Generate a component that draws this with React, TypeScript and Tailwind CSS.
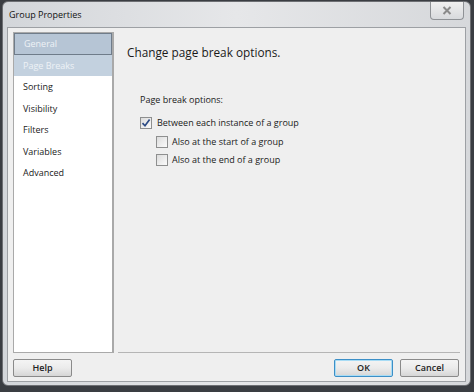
const navItems = ['General', 'Page Breaks', 'Sorting', 'Visibility', 'Filters', 'Variables', 'Advanced']

function CheckBox({ checked }: { checked?: boolean }) {
  return (
    <span className="flex h-[12px] w-[12px] shrink-0 items-center justify-center border border-[#8e8f8f] bg-gradient-to-br from-[#dcdcdc] to-[#fbfbfb]">
      {checked && (
        <svg width="10" height="10" viewBox="0 0 10 10">
          <path d="M1.5 5.2 L4 7.8 L8.6 1.6" fill="none" stroke="#2c4b85" strokeWidth="1.7" />
        </svg>
      )}
    </span>
  )
}

function Button({ label, primary }: { label: string; primary?: boolean }) {
  return (
    <button
      className={
        'flex h-[18px] w-[59px] items-center justify-center rounded-[2px] border bg-gradient-to-b from-[#f4f4f4] via-[#ebebeb] to-[#d6d6d6] text-[9px] font-semibold text-[#222] ' +
        (primary ? 'border-[#3c8fc7] shadow-[inset_0_0_0_1px_#a8dcf5]' : 'border-[#8a8a8a]')
      }
    >
      {label}
    </button>
  )
}

export default function App() {
  return (
    <div className="h-[392px] w-[474px] overflow-hidden bg-[#3a3d42] font-['Segoe_UI','Open_Sans','Noto_Sans',sans-serif]">
      <div className="ml-[2px] mt-[1px] flex h-[385px] w-[469px] flex-col rounded-[6px] border border-[#6d6f73] bg-gradient-to-r from-[#d3d6da] via-[#e6e7e9] to-[#d6d8db] px-[4px] pb-[3px]">
        {/* title bar */}
        <div className="flex h-[25px] items-start">
          <span className="ml-[2px] mt-[6px] text-[9px] text-[#111]">Group Properties</span>
          <div className="ml-auto mr-[2px] flex h-[18px] w-[34px] items-center justify-center rounded-b-[4px] border border-t-0 border-[#8f9296] bg-gradient-to-b from-[#f0f0f0] to-[#d8dadd]">
            <svg width="10" height="9" viewBox="0 0 10 9">
              <path d="M1.5 1 L8.5 8 M8.5 1 L1.5 8" stroke="#8a8a8a" strokeWidth="2" />
            </svg>
          </div>
        </div>

        {/* client area */}
        <div className="flex flex-1 flex-col border border-[#9da0a4] bg-[#efefef] px-[5px] pt-[4px]">
          <div className="flex h-[321px]">
            <div className="flex w-[101px] flex-col border border-r-2 border-[#a9a9a9] bg-white text-[9px]">
              {navItems.map((item, i) => (
                <div
                  key={item}
                  className={
                    'flex h-[21.5px] shrink-0 items-center pl-[9px] ' +
                    (i === 0
                      ? 'border border-[#6f7c8a] bg-[#b6c5d5] pl-[8px] text-[#eef2f6]'
                      : i === 1
                        ? 'bg-[#c3d1df] text-[#eef2f6]'
                        : 'text-[#1a1a1a]')
                  }
                >
                  {item}
                </div>
              ))}
            </div>

            <div className="flex flex-1 flex-col pl-[4px]">
              <div className="flex-1 border-b border-[#b5b5b5] pl-[9px] pt-[10px]">
                <div className="text-[11.8px] leading-[20px] text-[#1a1a1a]">Change page break options.</div>
                <div className="ml-[13px] mt-[30px] text-[9px] leading-[16px] text-[#1a1a1a]">
                  <div>Page break options:</div>
                  <div className="mt-[5px] flex h-[19px] items-center gap-[5px]">
                    <CheckBox checked />
                    <span>Between each instance of a group</span>
                  </div>
                  <div className="ml-[16px] flex h-[19px] items-center gap-[4px]">
                    <CheckBox />
                    <span>Also at the start of a group</span>
                  </div>
                  <div className="ml-[16px] flex h-[18px] items-center gap-[4px]">
                    <CheckBox />
                    <span>Also at the end of a group</span>
                  </div>
                </div>
              </div>
            </div>
          </div>

          {/* buttons */}
          <div className="mt-[6px] flex items-center pr-[1px]">
            <Button label="Help" />
            <div className="ml-auto flex gap-[7px]">
              <Button label="OK" primary />
              <Button label="Cancel" />
            </div>
          </div>
        </div>
      </div>
    </div>
  )
}
